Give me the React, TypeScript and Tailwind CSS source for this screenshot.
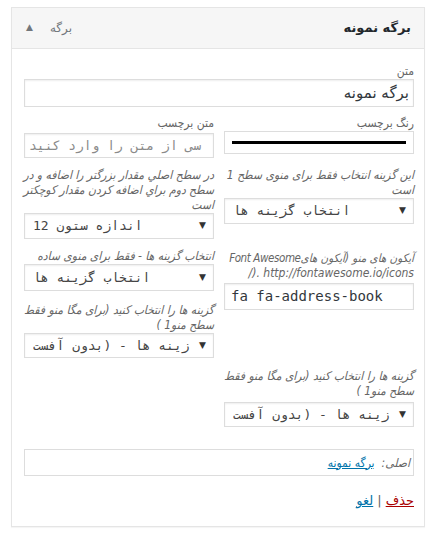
import React from 'react';

const fa = "font-['Tahoma','DejaVu_Sans',sans-serif]";
const faNarrow = "font-['DejaVu_Sans_Condensed','DejaVu_Sans',sans-serif] font-stretch-condensed";
const mono = "font-['DejaVu_Sans_Mono','Liberation_Mono',monospace]";

const Label = ({ children }: { children: React.ReactNode }) => (
  <div className={`whitespace-nowrap text-[12px] leading-[16px] text-[#666] ${faNarrow}`}>{children}</div>
);

const Desc = ({ lines, className = '' }: { lines: React.ReactNode[]; className?: string }) => (
  <div className={`whitespace-nowrap text-[12px] italic leading-[15px] text-[#666] ${faNarrow} ${className}`}>
    {lines.map((l, i) => (
      <div key={i}>{l}</div>
    ))}
  </div>
);

const Select = ({ text, className = '' }: { text: string; className?: string }) => (
  <div
    dir="ltr"
    className={`flex items-center border border-[#ddd] bg-white pl-[8px] pr-[7px] shadow-[inset_0_1px_2px_rgba(0,0,0,0.07)] ${className}`}
  >
    <span className={`flex-1 overflow-hidden whitespace-nowrap text-[13px] tracking-[0.5px] text-[#444] ${mono}`}>{text}</span>
    <span className="ml-[4px] text-[9px] text-[#333]">▼</span>
  </div>
);

export default function App() {
  return (
    <div className={`min-h-[538px] bg-white pt-[7px] pl-[11px] ${fa}`}>
      <div dir="rtl" className="w-[414px] border border-[#e5e5e5] bg-white shadow-[0_1px_1px_rgba(0,0,0,0.04)]">
        {/* header */}
        <div className="flex h-[41px] items-center justify-between border-b border-[#e5e5e5] bg-[#f6f6f6] pl-[14px] pr-[13px]">
          <span className="text-[13px] font-bold text-[#23282d]">برگه نمونه</span>
          <div className="flex items-center gap-[17px]">
            <span className="text-[12px] text-[#72777c]">برگه</span>
            <span className="text-[9px] text-[#72777c]">▲</span>
          </div>
        </div>

        {/* body */}
        <div className="pl-[12px] pr-[10px] pt-[14px] pb-[17px]">
          <Label>متن</Label>
          <div className="flex h-[28px] items-center border border-[#ddd] bg-white pr-[4px] text-[15px] text-[#32373c] shadow-[inset_0_1px_2px_rgba(0,0,0,0.07)]">
            برگه نمونه
          </div>

          <div className="mt-[8px] flex items-start justify-between">
            {/* right column */}
            <div className="flex w-[190px] flex-col">
              <Label>رنگ برچسب</Label>
              <div className="flex h-[23px] items-center border border-[#ddd] bg-white px-[7px]">
                <div className="h-[3px] w-full bg-black" />
              </div>
              <Desc className="mt-[14px]" lines={['این گزینه انتخاب فقط برای منوی سطح 1', 'است']} />
              <Select className="h-[26px]" text="انتخاب گزینه ها" />
              <div className={`mt-[27px] whitespace-nowrap text-[12px] italic leading-[15px] text-[#666] ${faNarrow}`}>
                <div className="text-[11.5px] tracking-[-0.4px]">آیکون های منو (آیکون هایFont Awesome</div>
                <div dir="ltr" className="text-right">/). http://fontawesome.io/icons</div>
              </div>
              <div
                dir="ltr"
                className={`mt-[2px] flex h-[27px] items-center border border-[#ddd] bg-white px-[6px] text-[14px] text-[#32373c] shadow-[inset_0_1px_2px_rgba(0,0,0,0.07)] ${mono}`}
              >
                fa fa-address-book
              </div>
              <Desc className="mt-[59px]" lines={['گزینه ها را انتخاب کنید (برای مگا منو فقط', 'سطح منو1 )']} />
              <Select className="mt-[3px] h-[25px]" text="زینه ها - (بدون آفست" />
            </div>

            {/* left column */}
            <div className="flex w-[190px] flex-col">
              <Label>متن برچسب</Label>
              <div
                dir="ltr"
                className={`mt-[2px] flex h-[25px] items-center overflow-hidden whitespace-nowrap border border-[#ddd] bg-white pl-[4px] text-[13px] tracking-[0.9px] text-[#8a8a8a] shadow-[inset_0_1px_2px_rgba(0,0,0,0.07)] ${mono}`}
              >
                سی از متن را وارد کنید
              </div>
              <Desc
                className="mt-[10px]"
                lines={['در سطح اصلي مقدار بزرگتر را اضافه و در', 'سطح دوم براي اضافه كردن مقدار كوچكتر', 'است']}
              />
              <Select className="h-[26px]" text="اندازه ستون 12" />
              <Desc className="mt-[10px]" lines={['انتخاب گزینه ها - فقط برای منوی ساده']} />
              <Select className="h-[27px]" text="انتخاب گزینه ها" />
              <Desc className="mt-[12px]" lines={['گزینه ها را انتخاب کنید (برای مگا منو فقط', 'سطح منو1 )']} />
              <Select className="h-[25px]" text="زینه ها - (بدون آفست" />
            </div>
          </div>

          <div className={`mt-[22px] flex h-[27px] items-center gap-[7px] border border-[#ddd] pr-[3px] text-[12px] ${faNarrow}`}>
            <span className="italic text-[#666]">اصلی:</span>
            <a href="#" className="text-[#0073aa] underline">برگه نمونه</a>
          </div>

          <div className="mt-[17px] flex items-center gap-[4px] text-[13px] leading-[16px]">
            <a href="#" className="text-[#a00] underline">حذف</a>
            <span className="text-[#666]">|</span>
            <a href="#" className="text-[#0073aa] underline">لغو</a>
          </div>
        </div>
      </div>
    </div>
  );
}
